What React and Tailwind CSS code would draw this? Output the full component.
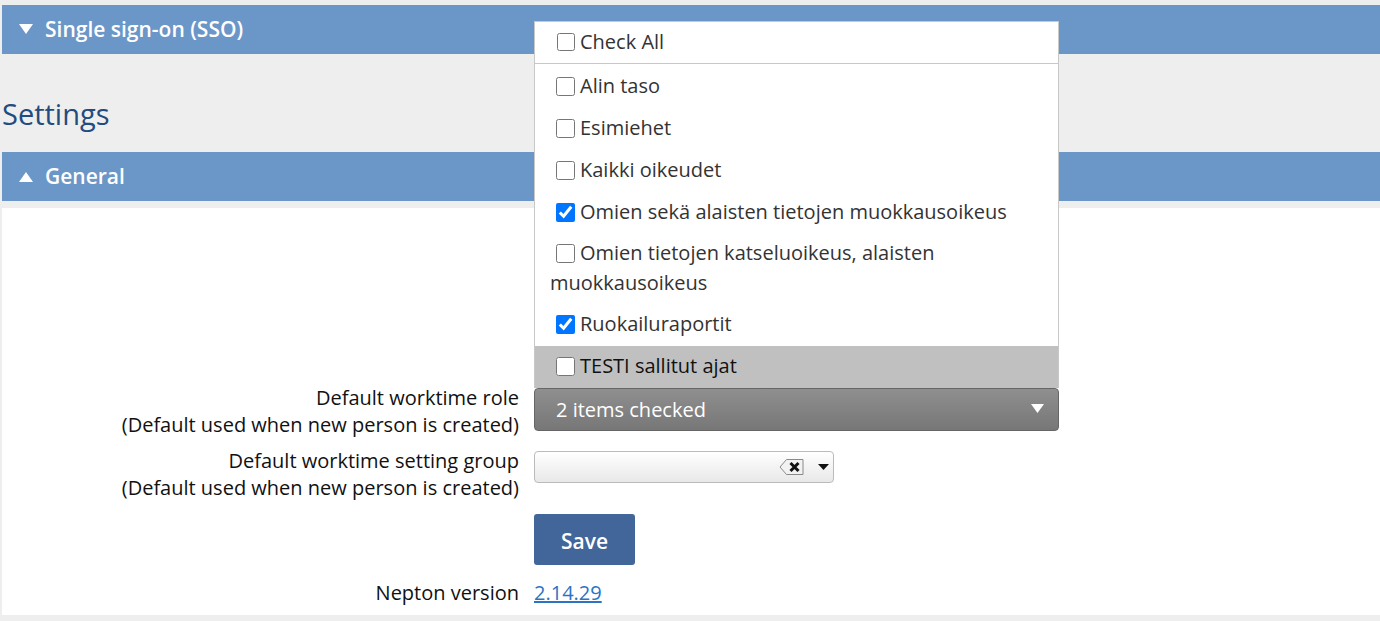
const roles = [
  { name: "Alin taso", pad: "py-[6px]" },
  { name: "Esimiehet", pad: "py-[6px]" },
  { name: "Kaikki oikeudet", pad: "py-[6px]" },
  { name: "Omien sekä alaisten tietojen muokkausoikeus", checked: true, pad: "py-[6px]" },
  { name: "Omien tietojen katseluoikeus, alaisten muokkausoikeus", pad: "pt-[5px] pb-[6px]" },
  { name: "Ruokailuraportit", checked: true, pad: "pt-[5px] pb-[7px]" },
  { name: "TESTI sallitut ajat", hover: true, pad: "pt-[5px] pb-[7px]" },
];

function Section({ title, open }) {
  return (
    <div className="h-[49px] bg-[#6b96c8] flex items-center pl-[17px] gap-[12px] text-white font-semibold text-[21px]">
      <svg width="14" height="10" viewBox="0 0 14 10" className={open ? "shrink-0" : "shrink-0 -mt-[2px]"}>
        <path d={open ? "M7 0l7 10H0z" : "M0 0h14L7 10z"} fill="#fff" />
      </svg>
      <span className={open ? "-mt-[1px]" : ""}>{title}</span>
    </div>
  );
}

function RoleItem({ name, checked, hover, pad }) {
  return (
    <label className={`block px-[15px] ${pad} ${hover ? "bg-[#c0c0c0] text-[#111]" : "text-[#333]"}`}>
      <input type="checkbox" defaultChecked={checked} className="w-[19px] h-[19px] ml-[6px] mr-[5px] align-[-3px]" />
      {name}
    </label>
  );
}

function FormRow({ label, children }) {
  return (
    <div className="flex gap-[15px]">
      <div className="w-[517px] text-right text-[#111] shrink-0">{label}</div>
      <div className="flex-1">{children}</div>
    </div>
  );
}

export default function App() {
  return (
    <div className="h-[621px] overflow-hidden bg-[#eeeeee] pt-[5px] pl-[2px] text-[20px] leading-[27px] font-['Open_Sans',sans-serif]">
      <Section title="Single sign-on (SSO)" />
      <h2 className="mt-[41px] mb-[20px] h-[37px] text-[29px] leading-[37px] font-normal text-[#224b80]">Settings</h2>
      <Section title="General" open />

      <div className="mt-[7px] h-[407px] bg-white pt-[176px]">
        <FormRow label={<>Default worktime role<br />(Default used when new person is created)</>}>
          <div className="relative w-[525px] mt-[4px]">
            <div className="absolute left-0 right-0 bottom-full bg-white border border-[#c8c8c8] border-b-0 leading-[30px]">
              <div className="border-b border-[#c8c8c8] px-[15px] py-[5px] h-[42px] text-[#333] mb-[1px]">
                <input type="checkbox" className="w-[18px] h-[18px] ml-[7px] mr-[5px] align-[-2px]" />
                Check All
              </div>
              {roles.map((r) => (
                <RoleItem key={r.name} {...r} />
              ))}
            </div>
            <div className="h-[43px] rounded-[4px] border border-[#666] bg-gradient-to-b from-[#8f8f8f] to-[#777777] flex items-center justify-between pl-[21px] pr-[14px] text-white">
              <span>2 items checked</span>
              <svg width="13" height="9" viewBox="0 0 13 9" className="-mt-[3px]">
                <path d="M0 0h13L6.5 9z" fill="#fff" />
              </svg>
            </div>
          </div>
        </FormRow>

        <div className="mt-[9px]">
          <FormRow label={<>Default worktime setting group<br />(Default used when new person is created)</>}>
            <div className="w-[300px] h-[32px] mt-[4px] rounded-[4px] border border-[#bbbbbb] bg-gradient-to-b from-white to-[#e8e8e8] flex items-center justify-end">
              <svg width="25" height="18" viewBox="0 0 25 18" className="mr-[14px]">
                <path d="M7.5 1.5h16.5v15H7.5L1 9z" fill="#f2f2f2" stroke="#8a8a8a" />
                <path d="M11.5 5l8 8M19.5 5l-8 8" stroke="#111" strokeWidth="3" />
              </svg>
              <svg width="11" height="6" viewBox="0 0 11 6" className="mr-[4px]">
                <path d="M0 0h11L5.5 6z" fill="#111" />
              </svg>
            </div>
          </FormRow>
        </div>

        <div className="mt-[13px] ml-[532px]">
          <button className="w-[101px] h-[51px] pt-[3px] rounded-[3px] bg-[#426699] text-white font-semibold text-[21px]">Save</button>
        </div>

        <div className="mt-[14px]">
          <FormRow label="Nepton version">
            <a href="#" className="text-[#2b74c4] underline">2.14.29</a>
          </FormRow>
        </div>
      </div>
    </div>
  );
}
